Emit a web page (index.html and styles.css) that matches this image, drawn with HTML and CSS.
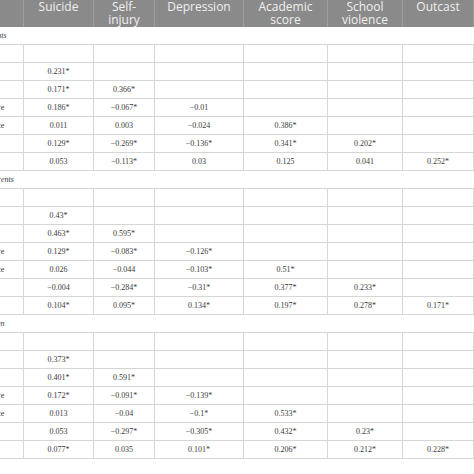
FILE: index.html
```html
<!DOCTYPE html>
<html>
<head>
<meta charset="utf-8">
<link rel="stylesheet" href="styles.css">
</head>
<body>
<div class="table">
  <div class="row head">
    <span class="h"></span>
    <span class="h">Suicide</span>
    <span class="h">Self-<br>injury</span>
    <span class="h">Depression</span>
    <span class="h">Academic<br>score</span>
    <span class="h">School<br>violence</span>
    <span class="h">Outcast</span>
  </div>

  <div class="row section"><span class="sec">All adolescents</span></div>
  <div class="row"><span class="lab">Suicide</span><span></span><span></span><span></span><span></span><span></span><span></span></div>
  <div class="row"><span class="lab">Self-injury</span><span>0.231*</span><span></span><span></span><span></span><span></span><span></span></div>
  <div class="row"><span class="lab">Depression</span><span>0.171*</span><span>0.366*</span><span></span><span></span><span></span><span></span></div>
  <div class="row"><span class="lab">Academic score</span><span>0.186*</span><span>−0.067*</span><span>−0.01</span><span></span><span></span><span></span></div>
  <div class="row"><span class="lab">School violence</span><span>0.011</span><span>0.003</span><span>−0.024</span><span>0.386*</span><span></span><span></span></div>
  <div class="row"><span class="lab">Outcast</span><span>0.129*</span><span>−0.269*</span><span>−0.136*</span><span>0.341*</span><span>0.202*</span><span></span></div>
  <div class="row"><span class="lab">Bullying</span><span>0.053</span><span>−0.113*</span><span>0.03</span><span>0.125</span><span>0.041</span><span>0.252*</span></div>

  <div class="row section"><span class="sec">Male adolescents</span></div>
  <div class="row"><span class="lab">Suicide</span><span></span><span></span><span></span><span></span><span></span><span></span></div>
  <div class="row"><span class="lab">Self-injury</span><span>0.43*</span><span></span><span></span><span></span><span></span><span></span></div>
  <div class="row"><span class="lab">Depression</span><span>0.463*</span><span>0.595*</span><span></span><span></span><span></span><span></span></div>
  <div class="row"><span class="lab">Academic score</span><span>0.129*</span><span>−0.083*</span><span>−0.126*</span><span></span><span></span><span></span></div>
  <div class="row"><span class="lab">School violence</span><span>0.026</span><span>−0.044</span><span>−0.103*</span><span>0.51*</span><span></span><span></span></div>
  <div class="row"><span class="lab">Outcast</span><span>−0.004</span><span>−0.284*</span><span>−0.31*</span><span>0.377*</span><span>0.233*</span><span></span></div>
  <div class="row"><span class="lab">Bullying</span><span>0.104*</span><span>0.095*</span><span>0.134*</span><span>0.197*</span><span>0.278*</span><span>0.171*</span></div>

  <div class="row section"><span class="sec">Rural children</span></div>
  <div class="row"><span class="lab">Suicide</span><span></span><span></span><span></span><span></span><span></span><span></span></div>
  <div class="row"><span class="lab">Self-injury</span><span>0.373*</span><span></span><span></span><span></span><span></span><span></span></div>
  <div class="row"><span class="lab">Depression</span><span>0.401*</span><span>0.591*</span><span></span><span></span><span></span><span></span></div>
  <div class="row"><span class="lab">Academic score</span><span>0.172*</span><span>−0.091*</span><span>−0.139*</span><span></span><span></span><span></span></div>
  <div class="row"><span class="lab">School violence</span><span>0.013</span><span>−0.04</span><span>−0.1*</span><span>0.533*</span><span></span><span></span></div>
  <div class="row"><span class="lab">Outcast</span><span>0.053</span><span>−0.297*</span><span>−0.305*</span><span>0.432*</span><span>0.23*</span><span></span></div>
  <div class="row"><span class="lab">Bullying</span><span>0.077*</span><span>0.035</span><span>0.101*</span><span>0.206*</span><span>0.212*</span><span>0.228*</span></div>
</div>
</body>
</html>
```

FILE: styles.css
```css
html, body {
  margin: 0;
  padding: 0;
  background: #ffffff;
  overflow: hidden;
}

.table {
  margin-left: -59px;
  width: 533px;
}

.row {
  display: grid;
  grid-template-columns: 83px 70px 61px 89px 84px 75px 71px;
  height: 18px;
  box-sizing: border-box;
  border-bottom: 1px solid #d6d6d6;
}

.row > span {
  border-right: 1px solid #d6d6d6;
  text-align: center;
  font-family: "Liberation Serif", "Times New Roman", serif;
  font-size: 8px;
  line-height: 17px;
  color: #3a3a3a;
  white-space: nowrap;
}

.row > span.lab {
  text-align: left;
  padding-left: 12px;
}

.row.head {
  height: 27px;
  background: #8a8a8a;
  border-bottom: none;
}

.row.head > span.h {
  font-family: "Open Sans", "DejaVu Sans", sans-serif;
  font-size: 12px;
  line-height: 13px;
  color: #f0f0f0;
  border-right: 1px solid #9e9e9e;
}

.row.section {
  display: block;
}

.row.section > span.sec {
  display: block;
  border-right: none;
  text-align: left;
  padding-left: 17px;
  font-style: italic;
}
```
